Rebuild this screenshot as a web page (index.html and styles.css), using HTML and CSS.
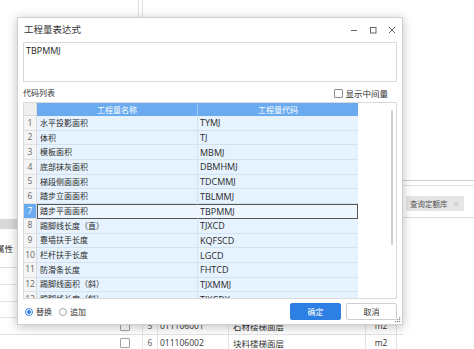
FILE: index.html
```html
<!DOCTYPE html>
<html lang="zh-CN">
<head>
<meta charset="utf-8">
<title>工程量表达式</title>
<link rel="stylesheet" href="styles.css">
</head>
<body>
<div class="app">
  <aside class="props">
    <div class="props-fill"></div>
    <div class="props-head"></div>
    <div class="props-title"><span>属性</span></div>
    <div class="props-row"></div>
    <div class="props-row"></div>
    <div class="props-row"></div>
    <div class="props-row"></div>
    <div class="props-row"></div>
  </aside>
  <main class="list">
    <div class="list-fill">
      <div class="f-a"></div>
      <div class="f-b"></div>
    </div>
    <div class="list-row">
      <div class="c-chk"><span class="box"></span></div>
      <div class="c-num">5</div>
      <div class="c-code">011106001</div>
      <div class="c-name">石材楼梯面层</div>
      <div class="c-unit">m2</div>
      <div class="c-rest"></div>
    </div>
    <div class="list-row">
      <div class="c-chk"><span class="box"></span></div>
      <div class="c-num">6</div>
      <div class="c-code">011106002</div>
      <div class="c-name">块料楼梯面层</div>
      <div class="c-unit">m2</div>
      <div class="c-rest"></div>
    </div>
  </main>
  <aside class="side">
    <div class="side-fill"></div>
    <div class="side-tabs"><span class="tab">查询定额库<span class="tab-x">×</span></span></div>
  </aside>
</div>

<div class="dialog">
  <div class="dlg-title">
    <h1>工程量表达式</h1>
    <span class="win-btn"><svg width="8" height="8" viewBox="0 0 8 8"><path d="M1 4.5H7" stroke="#666" stroke-width="1" fill="none"/></svg></span>
    <span class="win-btn"><svg width="8" height="8" viewBox="0 0 8 8"><rect x="1.5" y="1.5" width="5.5" height="5.5" stroke="#666" stroke-width="1" fill="none"/></svg></span>
    <span class="win-btn"><svg width="8" height="8" viewBox="0 0 8 8"><path d="M1 1L7 7M7 1L1 7" stroke="#666" stroke-width="1" fill="none"/></svg></span>
  </div>
  <div class="dlg-body">
    <div class="expr">TBPMMJ</div>
    <div class="list-head">
      <span>代码列表</span>
      <label class="chk"><span class="chk-box"></span>显示中间量</label>
    </div>
    <div class="grid-box">
      <div class="grid">
        <div class="h h-n"></div><div class="h name">工程量名称</div><div class="h code">工程量代码</div>
        <div class="n">1</div><div class="c name">水平投影面积</div><div class="c code">TYMJ</div>
        <div class="n">2</div><div class="c name">体积</div><div class="c code">TJ</div>
        <div class="n">3</div><div class="c name">模板面积</div><div class="c code">MBMJ</div>
        <div class="n">4</div><div class="c name">底部抹灰面积</div><div class="c code">DBMHMJ</div>
        <div class="n">5</div><div class="c name">梯段侧面面积</div><div class="c code">TDCMMJ</div>
        <div class="n">6</div><div class="c name">踏步立面面积</div><div class="c code">TBLMMJ</div>
        <div class="n sel">7</div><div class="c name sel">踏步平面面积</div><div class="c code sel">TBPMMJ</div>
        <div class="n">8</div><div class="c name">踢脚线长度（直）</div><div class="c code">TJXCD</div>
        <div class="n">9</div><div class="c name">靠墙扶手长度</div><div class="c code">KQFSCD</div>
        <div class="n">10</div><div class="c name">栏杆扶手长度</div><div class="c code">LGCD</div>
        <div class="n">11</div><div class="c name">防滑条长度</div><div class="c code">FHTCD</div>
        <div class="n">12</div><div class="c name">踢脚线面积（斜）</div><div class="c code">TJXMMJ</div>
        <div class="n">13</div><div class="c name">踢脚线长度（斜）</div><div class="c code">TJXCDX</div>
      </div>
      <div class="scroll"><div class="thumb"></div></div>
    </div>
    <div class="dlg-foot">
      <label class="radio first"><span class="dot on"></span>替换</label>
      <label class="radio"><span class="dot"></span>追加</label>
      <span class="btn primary">确定</span>
      <span class="btn">取消</span>
    </div>
  </div>
  <svg class="grip" width="6" height="6" viewBox="0 0 6 6"><g fill="#8a8a8a"><rect x="4" y="0" width="1.2" height="1.2"/><rect x="2" y="2" width="1.2" height="1.2"/><rect x="4" y="2" width="1.2" height="1.2"/><rect x="0" y="4" width="1.2" height="1.2"/><rect x="2" y="4" width="1.2" height="1.2"/><rect x="4" y="4" width="1.2" height="1.2"/></g></svg>
</div>
</body>
</html>
```

FILE: styles.css
```css
* { box-sizing: border-box; }

body {
  margin: 0;
  width: 474px;
  height: 349px;
  overflow: hidden;
  position: relative;
  background: #fff;
  font-family: "Noto Sans CJK SC", sans-serif;
  color: #333;
}

/* background application */
.app { display: flex; height: 352px; }

.props { width: 108px; display: flex; flex-direction: column; }
.props-fill { height: 222px; }
.props-head { height: 10px; background: #d8d8d8; }
.props-title {
  height: 40px;
  border-bottom: 1px solid #e0e0e0;
  display: flex;
  align-items: center;
  font-size: 8.5px;
  line-height: 1;
}
.props-title span { margin-left: -4px; }
.props-row { height: 17px; border-bottom: 1px solid #e3e3e3; }

.list { width: 295px; display: flex; flex-direction: column; }
.list-fill { flex: 1; display: flex; }
.f-a { width: 31px; border-right: 1px solid #dedede; }
.f-b { width: 4px; border-right: 1px solid #dedede; }
.list-row {
  height: 17px;
  display: flex;
  border-bottom: 1px solid #e3e3e3;
  font-size: 8.5px;
  line-height: 1;
}
.list-row > div { display: flex; align-items: center; border-right: 1px solid #e3e3e3; white-space: nowrap; }
.c-chk { width: 35px; justify-content: center; }
.c-num { width: 15px; justify-content: center; font-family: "Open Sans", sans-serif; color: #555; }
.c-code { width: 71px; padding-left: 2px; font-family: "Open Sans", sans-serif; }
.c-name { width: 137px; padding-left: 4px; }
.c-unit { width: 31px; justify-content: center; font-family: "Open Sans", sans-serif; }
.list-row > .c-rest { flex: 1; border-right: none; }
.box { width: 10px; height: 10px; border: 1px solid #a0a0a0; background: #fff; border-radius: 1px; }

.side { flex: 1; display: flex; flex-direction: column; }
.side-fill { height: 181px; border-bottom: 1px solid #d2d2d2; }
.side-tabs {
  margin-top: 4px;
  height: 33px;
  border-top: 1px solid #e2e2e2;
  border-bottom: 1px solid #dcdcdc;
  padding: 2px 3px;
}
.tab {
  display: inline-flex;
  align-items: center;
  height: 15px;
  padding: 0 4px;
  background: #e5e5e5;
  color: #555;
  font-size: 7.5px;
  line-height: 1;
}
.tab-x { margin-left: 5px; color: #aaa; font-size: 7px; }

/* dialog */
.dialog {
  position: absolute;
  left: 17px;
  top: 17px;
  width: 386px;
  height: 308px;
  border: 1px solid #cfcfcf;
  background: #fff;
  box-shadow: 0 2px 10px rgba(0, 0, 0, 0.25);
  display: flex;
  flex-direction: column;
}
.dlg-title { height: 24px; display: flex; align-items: center; padding: 0 1px 0 6px; }
.dlg-title h1 { flex: 1; margin: 0; font-size: 9.5px; font-weight: normal; line-height: 1; color: #333; }
.win-btn { width: 19px; height: 24px; display: flex; align-items: center; justify-content: center; }

.dlg-body { flex: 1; display: flex; flex-direction: column; padding: 0 5px; }

.expr {
  height: 40px;
  border: 1px solid #d9d9d9;
  padding: 2px 2px;
  font-family: "Open Sans", sans-serif;
  font-size: 9px;
  line-height: 12px;
  color: #222;
}

.list-head {
  margin-top: 3px;
  height: 16px;
  display: flex;
  align-items: center;
  justify-content: space-between;
  font-size: 8px;
  line-height: 1;
}
.chk { display: flex; align-items: center; margin-right: 9px; font-size: 8.5px; }
.chk-box { width: 9px; height: 9px; border: 1px solid #8c8c8c; border-radius: 1px; margin-right: 2px; background: #fff; }

.grid-box {
  margin-top: 1px;
  height: 197px;
  border: 1px solid #dadada;
  display: flex;
  overflow: hidden;
}
.grid {
  display: grid;
  grid-template-columns: 13px 161px 160px;
  grid-template-rows: 13px;
  grid-auto-rows: 14.7px;
  align-content: start;
  line-height: 1;
}
.h {
  background: #6aabf0;
  color: #fff;
  font-size: 8px;
  display: flex;
  align-items: center;
  justify-content: center;
}
.h.h-n { background: #eeeeee; border-right: 1px solid #dadada; border-bottom: 1px solid #dadada; }
.h.name { border-right: 1px solid #9cc7f3; }
.n {
  background: #f5f5f5;
  color: #666;
  font-family: "Open Sans", sans-serif;
  font-size: 8.5px;
  border-right: 1px solid #dadada;
  border-bottom: 1px solid #e2e2e2;
  display: flex;
  align-items: center;
  justify-content: center;
}
.n.sel { background: #6aabf0; color: #fff; }
.c {
  background: #e6f2fd;
  border-bottom: 1px solid #d3e2ef;
  display: flex;
  align-items: center;
  white-space: nowrap;
  overflow: hidden;
  color: #2a2a2a;
}
.c.name { padding-left: 3px; font-size: 8px; border-right: 1px solid #d3e2ef; }
.c.code { padding-left: 2px; font-family: "Open Sans", sans-serif; font-size: 9px; }
.c.sel { background: #edf6fe; border-top: 1px solid #555; border-bottom: 1px solid #555; }
.c.name.sel { border-left: 1px solid #555; padding-left: 2px; border-right-color: #edf6fe; }
.c.code.sel { border-right: 1px solid #555; }

.scroll { flex: 1; }
.thumb { margin: 7px 0 0 33px; width: 2px; height: 135px; background: #d0d0d0; border-radius: 1px; }

.dlg-foot { height: 25px; display: flex; align-items: center; font-size: 8px; line-height: 1; }
.radio { display: flex; align-items: center; margin-left: 7px; }
.radio.first { margin-left: 2px; }
.dot { width: 8px; height: 8px; border: 1px solid #a8a8a8; border-radius: 50%; margin-right: 3px; background: #fff; }
.dot.on { border-color: #3a88e8; background: radial-gradient(circle, #3a88e8 0 1.6px, #fff 2.2px); }
.btn {
  width: 51px;
  height: 17px;
  border: 1px solid #cfcfcf;
  border-radius: 2px;
  background: #fff;
  display: flex;
  align-items: center;
  justify-content: center;
  margin-left: 5px;
  color: #333;
}
.btn.primary { margin-left: auto; background: #2e7fe3; border-color: #2e7fe3; color: #fff; }

.grip { position: absolute; right: 1px; bottom: 1px; }
```
